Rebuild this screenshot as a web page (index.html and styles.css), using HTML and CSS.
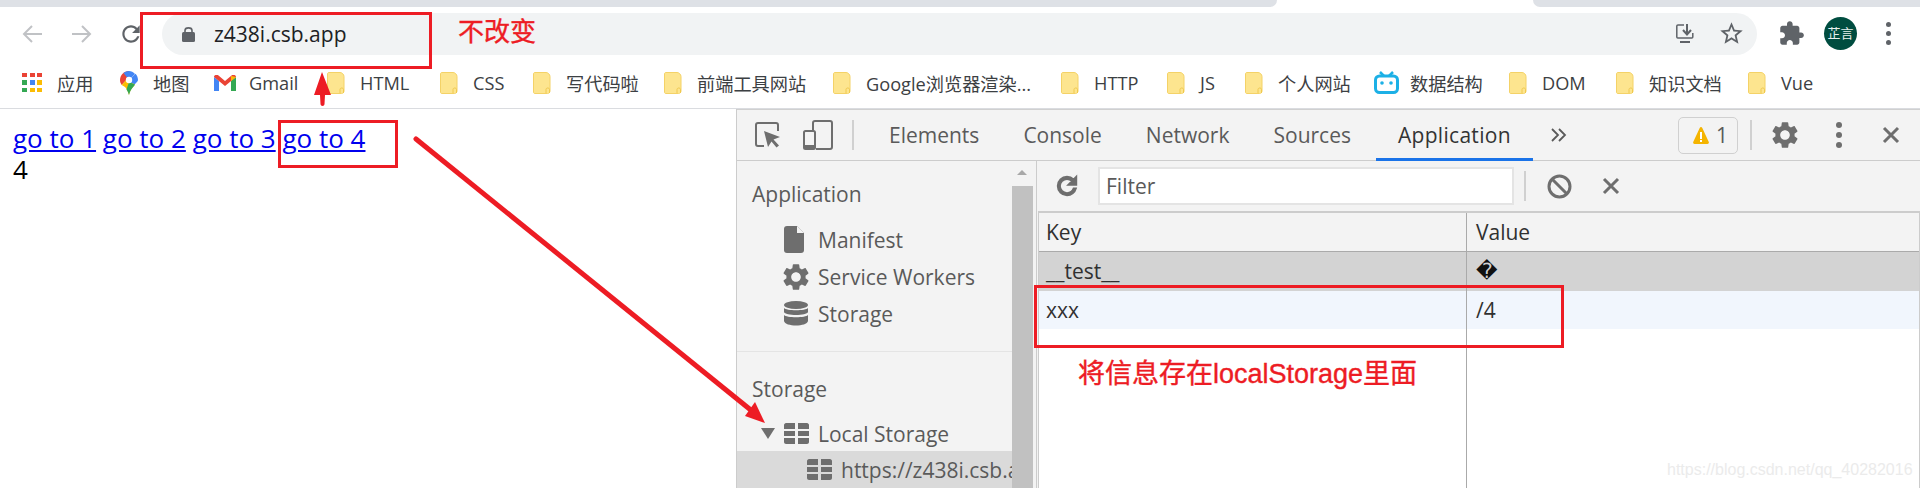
FILE: index.html
```html
<!DOCTYPE html>
<html lang="en">
<head>
  <meta charset="UTF-8" />
  <title>localStorage</title>
  <link rel="stylesheet" href="styles.css">
</head>
<body>

  <svg class="sprites" width="0" height="0">
    <symbol id="folder" viewBox="0 0 18 22">
      <path d="M2 .5h11c2 0 4 2 4 4V19c0 1.500-1 2.500-2.500 2.500H2C1 21.500.5 21 .5 20V2C.5 1 1 .5 2 .5z" fill="#fde58f" stroke="#f4d267" />
      <path d="M13 21v-3.500c0-2 3.500-2 3.500 0V21" fill="none" stroke="#f0c94f" />
    </symbol>
    <symbol id="gear" viewBox="0 0 24 24">
      <path d="M19.140 12.940c.04-.3.06-.61.06-.94 0-.32-.02-.64-.07-.94l2.030-1.580c.18-.14.23-.41.12-.61l-1.920-3.320c-.12-.22-.37-.29-.59-.22l-2.390.96c-.5-.38-1.030-.7-1.620-.94l-.36-2.540c-.04-.24-.24-.41-.48-.41h-3.840c-.24 0-.43.17-.47.41l-.36 2.540c-.59.24-1.130.57-1.620.94l-2.390-.96c-.22-.08-.47 0-.59.22L2.740 8.870c-.12.21-.08.47.12.61l2.030 1.580c-.05.3-.09.63-.09.94s.02.64.07.94l-2.030 1.580c-.18.14-.23.41-.12.61l1.920 3.320c.12.22.37.29.59.22l2.390-.96c.5.38 1.030.7 1.620.94l.36 2.540c.05.24.24.41.48.41h3.840c.24 0 .44-.17.47-.41l.36-2.540c.59-.24 1.130-.56 1.620-.94l2.390.96c.22.08.47 0 .59-.22l1.920-3.320c.12-.22.07-.47-.12-.61l-2.010-1.580zM12 15.600c-1.980 0-3.600-1.620-3.600-3.600s1.620-3.600 3.600-3.600 3.600 1.620 3.600 3.600-1.620 3.600-3.600 3.600z" fill="#6e6e6e" />
    </symbol>
    <symbol id="refresh" viewBox="0 0 24 24">
      <path d="M17.650 6.350C16.200 4.900 14.210 4 12 4c-4.420 0-7.990 3.580-7.990 8s3.570 8 7.990 8c3.730 0 6.840-2.550 7.730-6h-2.080c-.82 2.330-3.040 4-5.650 4-3.310 0-6-2.690-6-6s2.690-6 6-6c1.660 0 3.140.69 4.220 1.780L13 11h7V4l-2.350 2.350z" />
    </symbol>
    <symbol id="grid" viewBox="0 0 25 21">
      <path d="M2 0h9v6H0V2c0-1 1-2 2-2zM14 0h9c1 0 2 1 2 2v4H14zM0 8h11v5H0zM14 8h11v5H14zM0 15h11v6H2c-1 0-2-1-2-2zM14 15h11v4c0 1-1 2-2 2h-9z" fill="#6e6e6e" />
    </symbol>
    <symbol id="close" viewBox="0 0 18 18">
      <path d="M2 2l14 14M16 2L2 16" fill="none" stroke="#6e6e6e" stroke-width="3" />
    </symbol>
  </svg>

  <div class="strip">
    <div class="strip-left"></div>
    <div class="strip-gap"></div>
    <div class="strip-right"></div>
  </div>

  <div class="toolbar">
    <svg class="nav-back" width="22" height="20" viewBox="0 0 22 20"><path d="M20 10H3M10 2l-8 8 8 8" fill="none" stroke="#c0c2c5" stroke-width="2" /></svg>
    <svg class="nav-forward" width="22" height="20" viewBox="0 0 22 20"><path d="M2 10h17M12 2l8 8-8 8" fill="none" stroke="#c0c2c5" stroke-width="2" /></svg>
    <svg class="nav-reload" width="26" height="26" fill="#5f6368"><use href="#refresh" /></svg>
    <div class="omnibox">
      <svg class="lock" width="13" height="16" viewBox="0 0 13 16"><path d="M3 6V4.500C3 1 10 1 10 4.500V6" fill="none" stroke="#5f6368" stroke-width="1.600" /><rect y="6" width="13" height="10" rx="1.500" fill="#5f6368" /></svg>
      <span class="url">z438i.csb.app</span>
      <svg class="install" width="18" height="19" viewBox="0 0 18 19"><path d="M8 1H2C1 1 .8 1.500.8 2v11c0 .6.4 1 1 1h14c.6 0 1-.4 1-1V9" fill="none" stroke="#5f6368" stroke-width="1.500" /><path d="M11 0v9M7 6l4 4.500L15 6" fill="none" stroke="#5f6368" stroke-width="2" /><path d="M4 17h10v2H4z" fill="#5f6368" /></svg>
      <svg class="star" width="24" height="24" viewBox="0 0 24 24" fill="#5f6368"><path d="M22 9.240l-7.190-.62L12 2 9.190 8.630 2 9.240l5.460 4.730L5.820 21 12 17.270 18.180 21l-1.630-7.030L22 9.240zM12 15.400l-3.760 2.270 1-4.280-3.320-2.880 4.380-.38L12 6.100l1.710 4.040 4.380.38-3.320 2.880 1 4.280L12 15.400z" /></svg>
    </div>
    <svg class="puzzle" width="24" height="24" viewBox="0 0 24 24" fill="#5f6368"><path d="M20.500 11H19V7c0-1.100-.9-2-2-2h-4V3.500C13 2.120 11.880 1 10.500 1S8 2.120 8 3.500V5H4c-1.100 0-1.990.9-1.990 2v3.800H3.500c1.490 0 2.700 1.210 2.700 2.700s-1.210 2.700-2.700 2.700H2V20c0 1.100.9 2 2 2h3.800v-1.500c0-1.490 1.210-2.700 2.700-2.700 1.490 0 2.700 1.210 2.700 2.700V22H17c1.100 0 2-.9 2-2v-4h1.500c1.380 0 2.500-1.120 2.500-2.500S21.880 11 20.500 11z" /></svg>
    <div class="avatar">芷言</div>
    <div class="dots"><i></i><i></i><i></i></div>
  </div>

  <div class="bookmarks">
    <div class="bm">
      <svg class="bm-icon" width="20" height="19" viewBox="0 0 20 19">
        <path d="M0 0h5v4H0z" fill="#ea4335" /><path d="M8 0h5v4H8z" fill="#ea4335" /><path d="M15 0h5v4h-5z" fill="#ea4335" />
        <path d="M0 7h5v5H0z" fill="#34a853" /><path d="M8 7h5v5H8z" fill="#4285f4" /><path d="M15 7h5v5h-5z" fill="#fbbc04" />
        <path d="M0 15h5v4H0z" fill="#34a853" /><path d="M8 15h5v4H8z" fill="#fbbc04" /><path d="M15 15h5v4h-5z" fill="#fbbc04" />
      </svg>
      <span>应用</span>
    </div>
    <div class="bm">
      <svg class="bm-icon" width="18" height="24" viewBox="0 0 18 24">
        <path d="M9 0C4 0 0 4 0 9c0 2 .7 3.500 1.700 5L9 6z" fill="#ea4335" />
        <path d="M9 0c-2 0-4 .7-5.500 2L9 9l6-6C13.500 1 11 0 9 0z" fill="#4285f4" />
        <path d="M15.500 2.800L9 9l-2 2 7.800 2.300C17 11 18 10 18 9c0-2.500-1-4.600-2.500-6.200z" fill="#4285f4" />
        <path d="M1.700 14L9 6v5l6 2.500c-1 2-4.600 4-6 10.500-1-4-2.600-6.800-4-8z" fill="#fbbc04" />
        <path d="M9 11l6 2.500C14 15.500 10.500 18 9 24c-.5-2-1.500-4-2.500-5.500z" fill="#34a853" />
        <circle cx="9" cy="9" r="3.200" fill="#fff" />
      </svg>
      <span>地图</span>
    </div>
    <div class="bm">
      <svg class="bm-icon bm-icon-gmail" width="22" height="16" viewBox="0 0 22 16">
        <path d="M0 2v14h5V6z" fill="#4285f4" />
        <path d="M17 6v10h5V2z" fill="#34a853" />
        <path d="M0 2c0-2 3-3 4.500-1.500L11 6l6.500-5.500C19 -1 22 0 22 2l-11 9z" fill="#ea4335" />
        <path d="M17 1l5 1-5 4z" fill="#fbbc04" />
      </svg>
      <span>Gmail</span>
    </div>
    <div class="bm"><svg class="bm-icon" width="18" height="22"><use href="#folder" /></svg><span>HTML</span></div>
    <div class="bm"><svg class="bm-icon" width="18" height="22"><use href="#folder" /></svg><span>CSS</span></div>
    <div class="bm"><svg class="bm-icon" width="18" height="22"><use href="#folder" /></svg><span>写代码啦</span></div>
    <div class="bm"><svg class="bm-icon" width="18" height="22"><use href="#folder" /></svg><span>前端工具网站</span></div>
    <div class="bm"><svg class="bm-icon" width="18" height="22"><use href="#folder" /></svg><span>Google浏览器渲染...</span></div>
    <div class="bm"><svg class="bm-icon" width="18" height="22"><use href="#folder" /></svg><span>HTTP</span></div>
    <div class="bm"><svg class="bm-icon" width="18" height="22"><use href="#folder" /></svg><span>JS</span></div>
    <div class="bm"><svg class="bm-icon" width="18" height="22"><use href="#folder" /></svg><span>个人网站</span></div>
    <div class="bm">
      <svg class="bm-icon bm-icon-bili" width="25" height="23" viewBox="0 0 25 23">
        <path d="M6 1l4 4M19 1l-4 4" stroke="#1cb0e6" stroke-width="2.500" fill="none" />
        <rect x="1.500" y="5" width="22" height="16.500" rx="4" fill="none" stroke="#1cb0e6" stroke-width="3" />
        <circle cx="8" cy="12" r="1.800" fill="#1cb0e6" /><circle cx="17" cy="12" r="1.800" fill="#1cb0e6" />
      </svg>
      <span>数据结构</span>
    </div>
    <div class="bm"><svg class="bm-icon" width="18" height="22"><use href="#folder" /></svg><span>DOM</span></div>
    <div class="bm"><svg class="bm-icon" width="18" height="22"><use href="#folder" /></svg><span>知识文档</span></div>
    <div class="bm"><svg class="bm-icon" width="18" height="22"><use href="#folder" /></svg><span>Vue</span></div>
  </div>

  <div class="content">
    <div class="page">
      <a href="#">go to 1</a> <a href="#">go to 2</a> <a href="#">go to 3</a> <a href="#">go to 4</a>
      <div>4</div>
    </div>

    <div class="devtools">
      <div class="dt-tabs">
        <svg class="ic-inspect" width="26" height="26" viewBox="0 0 26 26">
          <path d="M9 24H3c-1 0-2-1-2-2V3c0-1 1-2 2-2h18c1 0 2 1 2 2v6" fill="none" stroke="#6e6e6e" stroke-width="2" />
          <path d="M9 9l16 6-6.500 2.500 5.500 6-2.500 2-5-6L13 25z" fill="#6e6e6e" />
        </svg>
        <svg class="ic-device" width="30" height="30" viewBox="0 0 30 30">
          <path d="M10 11V3c0-1 1-2 2-2h15c1 0 2 1 2 2v24c0 1-1 2-2 2H13" fill="none" stroke="#6e6e6e" stroke-width="2" />
          <rect x="1" y="11" width="11" height="18" rx="1.500" fill="none" stroke="#6e6e6e" stroke-width="2" />
          <path d="M1 25h11v3H1z" fill="#6e6e6e" />
        </svg>
        <div class="dt-sep"></div>
        <div class="tab">Elements</div>
        <div class="tab">Console</div>
        <div class="tab">Network</div>
        <div class="tab">Sources</div>
        <div class="tab tab-on">Application</div>
        <svg class="ic-more" width="16" height="14" viewBox="0 0 16 14"><path d="M1 1l6 6-6 6M8 1l6 6-6 6" fill="none" stroke="#5a5a5a" stroke-width="1.800" /></svg>
        <div class="issues">
          <svg width="16" height="17" viewBox="0 0 16 17"><path d="M8 0c.5 0 1 .3 1.300 1l6.500 14c.3.800-.2 2-1.300 2h-13C.4 17-.1 15.800.2 15L6.700 1C7 .3 7.500 0 8 0z" fill="#f4b400" /><path d="M7 5h2v7H7zM7 13h2v2H7z" fill="#fff" /></svg>
          <span>1</span>
        </div>
        <div class="dt-sep sep-issues"></div>
        <svg class="ic-gear" width="32" height="32"><use href="#gear" /></svg>
        <div class="dots dt-dots"><i></i><i></i><i></i></div>
        <svg class="ic-close" width="18" height="18"><use href="#close" /></svg>
      </div>

      <div class="dt-body">
        <div class="sidebar">
          <div class="side-list">
            <div class="side-head">Application</div>
            <div class="side-row first-row">
              <svg class="side-icon" width="20" height="27" viewBox="0 0 20 27"><path d="M3 0h10l7 7v17c0 2-1 3-3 3H3c-2 0-3-1-3-3V3c0-2 1-3 3-3z" fill="#6e6e6e" /><path d="M13 0v7h7z" fill="#f3f3f3" /></svg>
              <span>Manifest</span>
            </div>
            <div class="side-row">
              <svg class="side-icon gear-side" width="32" height="32"><use href="#gear" /></svg>
              <span>Service Workers</span>
            </div>
            <div class="side-row">
              <svg class="side-icon" width="24" height="25" viewBox="0 0 24 25"><ellipse cx="12" cy="4" rx="12" ry="4" fill="#6e6e6e" /><path d="M0 7c2 3 22 3 24 0v4c-1 4-23 4-24 0zM0 14c2 3 22 3 24 0v6c-1 6-23 6-24 0z" fill="#6e6e6e" /></svg>
              <span>Storage</span>
            </div>
            <div class="side-line"></div>
            <div class="side-head">Storage</div>
            <div class="side-row row-local">
              <i class="tri"></i>
              <svg class="side-icon" width="25" height="21"><use href="#grid" /></svg>
              <span>Local Storage</span>
            </div>
            <div class="side-row row-origin">
              <svg class="side-icon" width="25" height="21"><use href="#grid" /></svg>
              <span>https://z438i.csb.app</span>
            </div>
          </div>
          <div class="scrollbar">
            <i class="scroll-up"></i>
            <div class="scroll-thumb"></div>
          </div>
        </div>

        <div class="panel">
          <div class="filter-bar">
            <svg class="ic-reload" width="28" height="28" fill="#6e6e6e" stroke="#6e6e6e" stroke-width="1.500"><use href="#refresh" /></svg>
            <div class="filter">Filter</div>
            <div class="dt-sep sep-filter"></div>
            <svg class="ic-block" width="25" height="25" viewBox="0 0 25 25"><circle cx="12.500" cy="12.500" r="10.500" fill="none" stroke="#6e6e6e" stroke-width="3" /><path d="M5 5l15 15" stroke="#6e6e6e" stroke-width="3" /></svg>
            <svg class="ic-clear" width="18" height="18"><use href="#close" /></svg>
          </div>
          <div class="table">
            <div class="tr tr-head"><div class="td">Key</div><div class="td">Value</div></div>
            <div class="tr tr-selected"><div class="td">__test__</div><div class="td td-bad">&#xFFFD;</div></div>
            <div class="tr tr-alt"><div class="td">xxx</div><div class="td">/4</div></div>
            <div class="tr tr-fill"><div class="td"></div><div class="td"></div></div>
          </div>
        </div>
      </div>
    </div>
  </div>

  <!-- annotations pasted on top of the screenshot -->
  <div class="mark mark-url"></div>
  <div class="mark mark-link"></div>
  <div class="mark mark-row"></div>
  <div class="note note-url">不改变</div>
  <div class="note note-row">将信息存在localStorage里面</div>
  <svg class="arrows" width="1920" height="488" viewBox="0 0 1920 488">
    <path d="M322 72l9 23h-6l-.5 9c0 2.500-4 2.500-4 0l-.5-9h-6z" fill="#ed1c24" />
    <path d="M416 139L752 411" stroke="#ed1c24" stroke-width="5" stroke-linecap="round" />
    <path d="M765 423l-20-7 10-14z" fill="#ed1c24" />
  </svg>
  <div class="watermark">https://blog.csdn.net/qq_40282016</div>

</body>
</html>
```

FILE: styles.css
```css
* {
  box-sizing: border-box;
}
html, body {
  margin: 0;
  height: 488px;
  overflow: hidden;
}
body {
  position: relative;
  background: white;
  font-family: "Open Sans", "Noto Sans CJK SC", sans-serif;
  color: #333;
}
.sprites {
  position: absolute;
}

/* browser chrome */
.strip {
  display: flex;
  height: 7px;
}
.strip-left {
  width: 1277px;
  background: #dee1e6;
  border-bottom-right-radius: 8px;
}
.strip-gap {
  width: 256px;
}
.strip-right {
  flex: 1;
  background: #dee1e6;
  border-bottom-left-radius: 8px;
}
.toolbar {
  display: flex;
  align-items: center;
  height: 53px;
  padding-left: 22px;
}
.nav-forward {
  margin-left: 26px;
}
.nav-reload {
  margin-left: 26px;
}
.omnibox {
  display: flex;
  align-items: center;
  width: 1595px;
  height: 42px;
  margin-left: 18px;
  padding-left: 20px;
  background: #f1f3f4;
  border-radius: 21px;
}
.url {
  margin-left: 19px;
  font-size: 21px;
  color: #202124;
  flex: 1;
}
.star {
  margin-left: 24px;
  margin-right: 12px;
  width: 27px;
  height: 27px;
}
.puzzle {
  width: 27px;
  height: 27px;
  margin-left: 21px;
}
.avatar {
  width: 33px;
  height: 33px;
  margin-left: 19px;
  border-radius: 50%;
  background: #004d40;
  color: #e8f0ee;
  font-size: 13px;
  line-height: 33px;
  text-align: center;
  white-space: nowrap;
}
.dots {
  display: flex;
  flex-direction: column;
  gap: 4px;
  margin-left: 29px;
}
.dots i {
  width: 5px;
  height: 5px;
  border-radius: 50%;
  background: #5f6368;
}
.bookmarks {
  display: grid;
  grid-template-columns: 98px 94px 113px 113px 93px 131px 169px 228px 106px 78px 129px 135px 107px 132px auto;
  align-items: center;
  height: 49px;
  padding: 0 0 3px 22px;
  border-bottom: 1px solid #dadce0;
  font-size: 18.200px;
  color: #3c4043;
}
.bm {
  display: flex;
  align-items: center;
  white-space: nowrap;
}
.bm-icon {
  margin-right: 15px;
}
.bm-icon-gmail {
  margin-right: 13px;
}
.bm-icon-bili {
  margin-right: 11px;
}

/* page + devtools */
.content {
  display: flex;
  height: 379px;
}
.page {
  width: 736px;
  padding: 14px 13px 0;
  font-size: 26px;
  line-height: 31px;
  color: #000;
}
.page a {
  color: #0000ee;
}
.devtools {
  flex: 1;
  display: flex;
  flex-direction: column;
  border-left: 1px solid #ccc;
  background: #f3f3f3;
  color: #5a5a5a;
  font-size: 21px;
}
.dt-tabs {
  display: flex;
  align-items: center;
  height: 52px;
  border-top: 1px solid #d0d0d0;
  border-bottom: 1px solid #ccc;
}
.ic-inspect {
  margin-left: 18px;
}
.ic-device {
  margin-left: 22px;
}
.dt-sep {
  width: 2px;
  height: 30px;
  margin-left: 19px;
  background: #d0d0d0;
}
.tab {
  height: 51px;
  padding: 0 22px;
  line-height: 50px;
}
.dt-sep + .tab {
  margin-left: 13px;
}
.tab-on {
  margin-left: 3px;
  color: #333;
  letter-spacing: 0.3px;
  border-bottom: 3px solid #1a73e8;
}
.ic-more {
  margin-left: 18px;
}
.issues {
  display: flex;
  align-items: center;
  gap: 7px;
  width: 60px;
  height: 37px;
  margin-left: auto;
  padding-left: 14px;
  border: 1px solid #d0d0d0;
  border-radius: 5px;
  color: #5a5a5a;
}
.sep-issues {
  margin-left: 12px;
}
.ic-gear {
  margin-left: 17px;
}
.dt-dots {
  margin-left: 35px;
  gap: 4px;
}
.dt-dots i {
  background: #6e6e6e;
  width: 6px;
  height: 6px;
}
.ic-close {
  margin-left: 40px;
  margin-right: 20px;
}
.dt-body {
  flex: 1;
  display: flex;
  min-height: 0;
}
.sidebar {
  display: flex;
  width: 300px;
  border-right: 1px solid #ccc;
  padding-right: 3px;
}
.side-list {
  width: 275px;
  padding-top: 15px;
  overflow: hidden;
}
.side-head {
  height: 37px;
  padding-left: 15px;
  line-height: 37px;
}
.side-row {
  position: relative;
  display: flex;
  align-items: center;
  height: 37px;
  padding-left: 81px;
  white-space: nowrap;
}
.side-icon {
  position: absolute;
  left: 47px;
}
.gear-side {
  left: 43px;
}
.first-row {
  margin-top: 8px;
}
.side-line {
  height: 1px;
  margin: 19px 0;
  background: #e4e4e4;
}
.row-local {
  height: 35px;
  margin-top: 8px;
}
.tri {
  position: absolute;
  left: 24px;
  top: 12px;
  border-style: solid;
  border-width: 11px 7px 0;
  border-color: #6e6e6e transparent transparent;
}
.row-origin {
  padding-left: 104px;
  background: #dadada;
}
.row-origin .side-icon {
  left: 70px;
}
.scrollbar {
  position: relative;
  flex: 1;
  padding-top: 25px;
}
.scroll-up {
  position: absolute;
  top: 9px;
  left: 5px;
  border-style: solid;
  border-width: 0 5px 5px;
  border-color: transparent transparent #a8a8a8;
}
.scroll-thumb {
  height: 100%;
  background: #c1c1c1;
}
.panel {
  flex: 1;
  display: flex;
  flex-direction: column;
  padding-left: 1px;
  min-width: 0;
}
.filter-bar {
  display: flex;
  align-items: center;
  height: 50px;
  flex: none;
}
.ic-reload {
  margin-left: 15px;
}
.filter {
  width: 416px;
  height: 38px;
  margin-left: 17px;
  padding-left: 6px;
  background: white;
  border: 2px solid #e4e4e4;
  line-height: 34px;
  color: #5a5a5a;
}
.sep-filter {
  margin-left: 10px;
}
.ic-block {
  margin-left: 21px;
}
.ic-clear {
  margin-left: 30px;
}
.table {
  flex: 1;
  display: flex;
  flex-direction: column;
  background: white;
  border-top: 2px solid #ccc;
  border-left: 1px solid #ccc;
  border-right: 1px solid #ccc;
  color: #303030;
}
.tr {
  display: grid;
  grid-template-columns: 428px 1fr;
  height: 39px;
  flex: none;
}
.td {
  padding-left: 7px;
  line-height: 38px;
}
.td:first-child {
  border-right: 1px solid #aaa;
}
.td + .td {
  padding-left: 9px;
}
.tr-head {
  background: #f3f3f3;
  border-bottom: 1px solid #aaa;
}
.tr-selected {
  background: #d3d3d3;
}
.tr-alt {
  background: #f1f6fd;
  height: 38px;
}
.tr-fill {
  flex: 1;
}
.td-bad {
  font-family: "DejaVu Sans", sans-serif;
  color: #111;
}

/* red annotations */
.mark {
  position: absolute;
  border: 3px solid #ed1c24;
}
.mark-url {
  left: 140px;
  top: 12px;
  width: 292px;
  height: 57px;
}
.mark-link {
  left: 278px;
  top: 120px;
  width: 120px;
  height: 48px;
}
.mark-row {
  left: 1034px;
  top: 285px;
  width: 530px;
  height: 63px;
}
.note {
  position: absolute;
  color: #ed1c24;
  white-space: nowrap;
  -webkit-text-stroke: 0.4px #ed1c24;
}
.note-url {
  left: 458px;
  top: 13px;
  font-size: 26px;
  line-height: 36px;
}
.note-row {
  left: 1078px;
  top: 356px;
  font-family: "Liberation Sans", "Noto Sans CJK SC", sans-serif;
  font-size: 27px;
  line-height: 36px;
}
.arrows {
  position: absolute;
  left: 0;
  top: 0;
  pointer-events: none;
}
.watermark {
  position: absolute;
  left: 1667px;
  top: 460px;
  font-family: "Liberation Sans", sans-serif;
  font-size: 16px;
  line-height: 20px;
  color: #ebebeb;
  white-space: nowrap;
}
```
